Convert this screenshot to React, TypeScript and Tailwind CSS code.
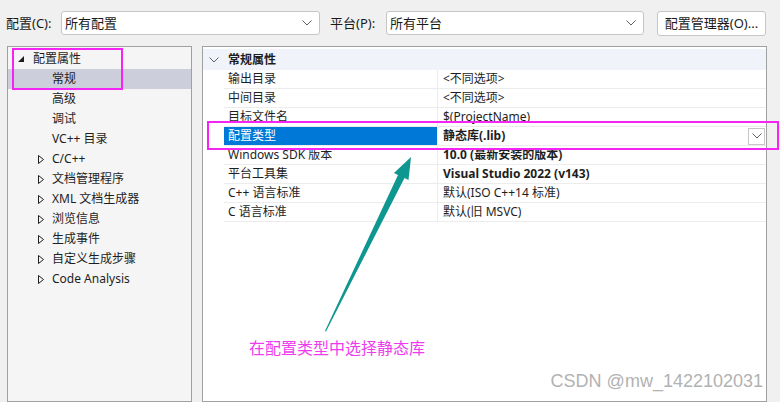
import React from 'react';

const font = { fontFamily: '"Noto Sans", "Noto Sans CJK SC", sans-serif' };

function Chevron({ className = '' }: { className?: string }) {
  return (
    <svg width="10" height="6" viewBox="0 0 10 6" className={className}>
      <polyline points="0.5,0.5 5,5 9.5,0.5" fill="none" stroke="#606060" strokeWidth="1" />
    </svg>
  );
}

function Combo({ text, width }: { text: string; width: string }) {
  return (
    <div className={`${width} h-[24px] bg-white border border-[#c6c6c6] rounded-[3px] flex items-center justify-between pl-[3px] pr-[7px]`}>
      <span className="text-[13px] leading-none text-[#1a1a1a]">{text}</span>
      <Chevron />
    </div>
  );
}

type TreeItem = { label: string; kind: 'root' | 'leaf' | 'closed'; selected?: boolean };

const tree: TreeItem[] = [
  { label: '配置属性', kind: 'root' },
  { label: '常规', kind: 'leaf', selected: true },
  { label: '高级', kind: 'leaf' },
  { label: '调试', kind: 'leaf' },
  { label: 'VC++ 目录', kind: 'leaf' },
  { label: 'C/C++', kind: 'closed' },
  { label: '文档管理程序', kind: 'closed' },
  { label: 'XML 文档生成器', kind: 'closed' },
  { label: '浏览信息', kind: 'closed' },
  { label: '生成事件', kind: 'closed' },
  { label: '自定义生成步骤', kind: 'closed' },
  { label: 'Code Analysis', kind: 'closed' },
];

type Prop = { name: string; value: string; bold?: boolean; selected?: boolean };

const props: Prop[] = [
  { name: '输出目录', value: '<不同选项>' },
  { name: '中间目录', value: '<不同选项>' },
  { name: '目标文件名', value: '$(ProjectName)' },
  { name: '配置类型', value: '静态库(.lib)', bold: true, selected: true },
  { name: 'Windows SDK 版本', value: '10.0 (最新安装的版本)', bold: true },
  { name: '平台工具集', value: 'Visual Studio 2022 (v143)', bold: true },
  { name: 'C++ 语言标准', value: '默认(ISO C++14 标准)' },
  { name: 'C 语言标准', value: '默认(旧 MSVC)' },
];

function TreeRow({ item }: { item: TreeItem }) {
  return (
    <div className={`h-[20px] flex items-center ${item.selected ? 'bg-[#cccedb]' : ''}`}>
      {item.kind === 'root' && (
        <>
          <svg width="6" height="6" viewBox="0 0 6 6" className="ml-[10px]">
            <polygon points="6,0 6,6 0,6" fill="#1e1e1e" />
          </svg>
          <span className="ml-[9px] text-[12px] leading-none text-[#1e1e1e]">{item.label}</span>
        </>
      )}
      {item.kind === 'closed' && (
        <>
          <svg width="6" height="9" viewBox="0 0 6 9" className="ml-[30px]">
            <polygon points="0.5,0.5 5.5,4.5 0.5,8.5" fill="none" stroke="#1e1e1e" strokeWidth="1" />
          </svg>
          <span className="ml-[8px] text-[12px] leading-none text-[#1e1e1e]">{item.label}</span>
        </>
      )}
      {item.kind === 'leaf' && <span className="ml-[44px] text-[12px] leading-none text-[#1e1e1e]">{item.label}</span>}
    </div>
  );
}

function PropRow({ p }: { p: Prop }) {
  return (
    <div className="h-[19px] flex">
      <div className="w-[21px] shrink-0" />
      <div className="w-[214px] shrink-0 flex items-center border-b border-r border-[#ececec]">
        <div
          className={`w-full h-full flex items-center pl-[4px] ${
            p.selected ? 'bg-[#0078d7] text-white' : 'text-[#1e1e1e]'
          }`}
        >
          <span className="text-[12px] leading-none">{p.name}</span>
        </div>
      </div>
      <div className="flex-1 flex items-center justify-between pl-[5px] pr-[1px] border-b border-[#ececec]">
        <span className={`text-[12px] leading-none text-[#1e1e1e] ${p.bold ? 'font-bold' : ''}`}>{p.value}</span>
        {p.selected && (
          <div className="w-[17px] h-[17px] border border-[#c6c6c6] bg-white flex items-center justify-center">
            <Chevron />
          </div>
        )}
      </div>
    </div>
  );
}

export default function App() {
  return (
    <div className="relative w-[780px] h-[402px] overflow-hidden bg-[#f0f0f0]" style={font}>
      <div className="h-[46px] flex items-center pl-[6px]">
        <span className="w-[55px] text-[13px] leading-none text-[#1a1a1a]">配置(C):</span>
        <Combo text="所有配置" width="w-[259px]" />
        <span className="ml-[10px] w-[56px] text-[13px] leading-none text-[#1a1a1a]">平台(P):</span>
        <Combo text="所有平台" width="w-[258px]" />
        <button className="ml-[13px] w-[109px] h-[25px] bg-white border border-[#c6c6c6] rounded-[3px] text-[13px] leading-none text-[#1a1a1a]">
          配置管理器(O)...
        </button>
      </div>

      <div className="flex pl-[7px] h-[356px]">
        <div className="w-[185px] h-full border border-[#a0a0a0] bg-[#f5f5f5] pt-[2px]">
          {tree.map((t) => (
            <TreeRow key={t.label} item={t} />
          ))}
        </div>
        <div className="ml-[10px] w-[565px] h-full border border-[#a0a0a0] bg-white pt-[2px]">
          <div className="h-[21px] bg-[#f0f4fa] flex items-center">
            <Chevron className="ml-[6px]" />
            <span className="ml-[9px] text-[12px] leading-none font-bold text-[#1e1e1e]">常规属性</span>
          </div>
          {props.map((p) => (
            <PropRow key={p.name} p={p} />
          ))}
        </div>
      </div>

      {/* annotations */}
      <div className="absolute left-[12px] top-[48px] w-[111px] h-[42px] border-2 border-[#f524f5]" />
      <div className="absolute left-[207px] top-[121px] w-[572px] h-[29px] border-2 border-[#f524f5]" />
      <svg className="absolute left-0 top-0" width="780" height="402">
        <polygon
          points="325,331 398,175 394,173 411,157 408.5,180 404.5,178 326,331.5"
          fill="#0e9690"
        />
      </svg>
      <span className="absolute left-[249px] top-[338px] text-[16px] leading-[20px] text-[#ee3bee]">
        在配置类型中选择静态库
      </span>
      <span
        className="absolute right-[17px] top-[370px] text-[18px] leading-[22px] text-[#b2b2b2]"
        style={{ fontFamily: '"Liberation Sans", sans-serif' }}
      >
        CSDN @mw_1422102031
      </span>
    </div>
  );
}
